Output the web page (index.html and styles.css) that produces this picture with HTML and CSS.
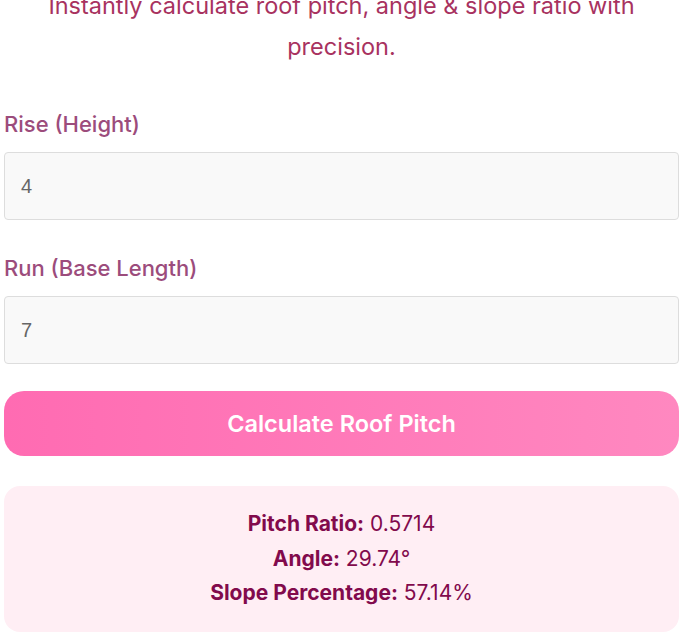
FILE: index.html
```html
<!DOCTYPE html>
<html lang="en">
<head>
  <meta charset="UTF-8">
  <meta name="viewport" content="width=device-width, initial-scale=1">
  <title>Roof Pitch Calculator</title>
  <link rel="stylesheet" href="styles.css">
</head>
<body>

  <div class="calculator">
    <p class="subtitle">Instantly calculate roof pitch, angle &amp; slope ratio with precision.</p>

    <div class="fields">
      <div class="field">
        <label for="rise">Rise (Height)</label>
        <input type="number" id="rise" value="4">
      </div>
      <div class="field">
        <label for="run">Run (Base Length)</label>
        <input type="number" id="run" value="7">
      </div>
    </div>

    <button class="calc-btn">Calculate Roof Pitch</button>

    <div class="result">
      <p><strong>Pitch Ratio:</strong> 0.5714</p>
      <p><strong>Angle:</strong> 29.74°</p>
      <p><strong>Slope Percentage:</strong> 57.14%</p>
    </div>
  </div>

</body>
</html>
```

FILE: styles.css
```css
body {
  margin: 0;
  font-family: 'Inter', 'Open Sans', Arial, sans-serif;
  background: #fff;
  color: #333;
}
.calculator {
  width: 675px;
  margin: -15px 0 0 4px;
  display: flex;
  flex-direction: column;
}
.subtitle {
  margin: 0 0 42px 0;
  padding: 0 30px;
  text-align: center;
  font-size: 23.5px;
  line-height: 41px;
  color: #a8325f;
}
.fields {
  display: flex;
  flex-direction: column;
  gap: 33px;
  margin-bottom: 27px;
}
.field {
  display: flex;
  flex-direction: column;
  gap: 13px;
}
.field label {
  font-size: 22px;
  line-height: 30px;
  font-weight: 500;
  color: #9c4c7c;
}
.field input {
  box-sizing: border-box;
  height: 68px;
  padding: 0 16px;
  border: 1px solid #ddd;
  border-radius: 4px;
  background: #f9f9f9;
  font-family: 'Liberation Sans', Arial, sans-serif;
  font-size: 20px;
  color: #666;
  outline: none;
}
.calc-btn {
  height: 65px;
  border: none;
  border-radius: 20px;
  background: linear-gradient(90deg, #ff6bb2 0%, #ff88c0 100%);
  color: #fff;
  font-family: inherit;
  font-size: 23.5px;
  font-weight: 600;
  cursor: pointer;
  margin-bottom: 30px;
}
.result {
  background: #ffeef4;
  border-radius: 16px;
  padding: 21px 0;
  text-align: center;
  color: #820a4c;
  font-size: 21px;
}
.result p {
  margin: 0;
  line-height: 34.5px;
}
.result strong {
  font-weight: 700;
}
```
